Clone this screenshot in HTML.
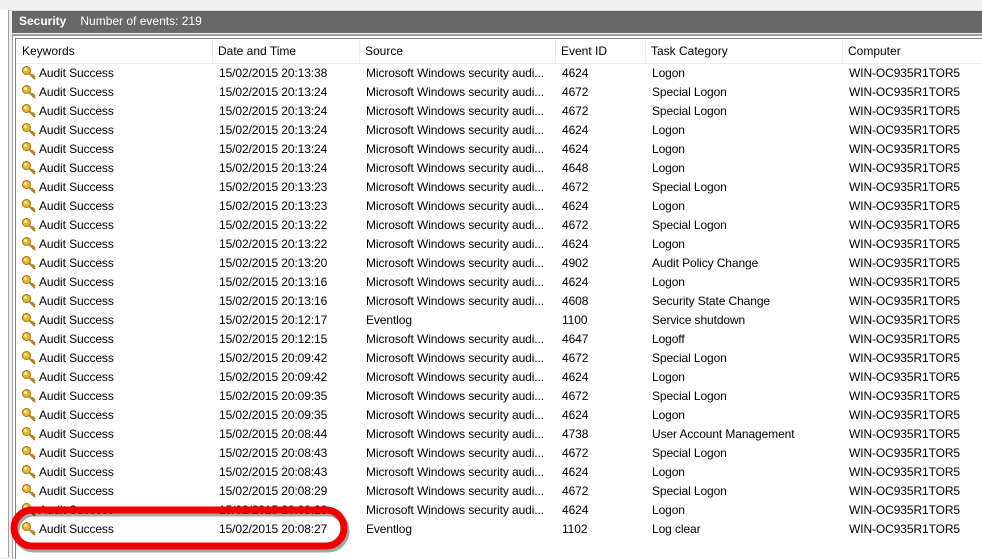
<!DOCTYPE html>
<html><head><style>
body{margin:0;width:982px;height:557px;overflow:hidden;background:#f0f0f0;font-family:"Liberation Sans",sans-serif;font-size:12px;color:#000;position:relative}
.left{position:absolute;left:0;top:10px;width:8px;height:547px;background:#fff;border-right:1px solid #a0a0a0}
.top{position:absolute;left:0;top:0;width:982px;height:10px;background:#f0f0f0;border-bottom:1px solid #d9d9d9}
.bar{position:absolute;left:12px;top:11px;width:970px;height:22px;background:#686868;color:#fff;line-height:21px}
.bar b{margin-left:7px;margin-right:14px}
.list{position:absolute;left:12px;top:34px;width:970px;height:523px;background:#fff;border-top:2px solid #a0a0a0;border-left:1px solid #a0a0a0}
.inner{position:absolute;left:2px;top:2px;right:0;bottom:0;border-left:1px solid #828282;border-top:1px solid #828282}
.hdr{position:absolute;top:0;left:0;right:0;height:24px;border-bottom:1px solid #e5edf6}
.hdr span{position:absolute;top:5px}
.hdr i{position:absolute;top:0;height:24px;border-left:1px solid #e5edf6}
.row{position:absolute;left:0;height:19px;width:960px}
.row span{position:absolute;top:2px;white-space:nowrap;letter-spacing:-0.1px}
.key{position:absolute;left:5px;top:1px;width:16px;height:16px}
</style></head><body>
<div class="top"></div>
<div class="left"></div>
<div class="bar"><b>Security</b>Number of events: 219</div>
<div class="list"><div class="inner">
<div class="hdr">
<span style="left:6px">Keywords</span><i style="left:196px"></i>
<span style="left:202px">Date and Time</span><i style="left:343px"></i>
<span style="left:349px">Source</span><i style="left:539px"></i>
<span style="left:545px">Event ID</span><i style="left:629px"></i>
<span style="left:635px">Task Category</span><i style="left:826px"></i>
<span style="left:832px">Computer</span>
</div>
<div id="rows"></div>
</div></div>
<svg style="position:absolute;left:0;top:0" width="982" height="557"><rect x="16" y="513" width="330" height="36" rx="18" ry="18" fill="none" stroke="rgba(0,0,0,0.35)" stroke-width="7"/><rect x="14" y="510" width="330" height="36" rx="18" ry="18" fill="none" stroke="#ee0000" stroke-width="7"/></svg>
<script>
var d=[["15/02/2015 20:13:38","Microsoft Windows security audi...","4624","Logon"],
["15/02/2015 20:13:24","Microsoft Windows security audi...","4672","Special Logon"],
["15/02/2015 20:13:24","Microsoft Windows security audi...","4672","Special Logon"],
["15/02/2015 20:13:24","Microsoft Windows security audi...","4624","Logon"],
["15/02/2015 20:13:24","Microsoft Windows security audi...","4624","Logon"],
["15/02/2015 20:13:24","Microsoft Windows security audi...","4648","Logon"],
["15/02/2015 20:13:23","Microsoft Windows security audi...","4672","Special Logon"],
["15/02/2015 20:13:23","Microsoft Windows security audi...","4624","Logon"],
["15/02/2015 20:13:22","Microsoft Windows security audi...","4672","Special Logon"],
["15/02/2015 20:13:22","Microsoft Windows security audi...","4624","Logon"],
["15/02/2015 20:13:20","Microsoft Windows security audi...","4902","Audit Policy Change"],
["15/02/2015 20:13:16","Microsoft Windows security audi...","4624","Logon"],
["15/02/2015 20:13:16","Microsoft Windows security audi...","4608","Security State Change"],
["15/02/2015 20:12:17","Eventlog","1100","Service shutdown"],
["15/02/2015 20:12:15","Microsoft Windows security audi...","4647","Logoff"],
["15/02/2015 20:09:42","Microsoft Windows security audi...","4672","Special Logon"],
["15/02/2015 20:09:42","Microsoft Windows security audi...","4624","Logon"],
["15/02/2015 20:09:35","Microsoft Windows security audi...","4672","Special Logon"],
["15/02/2015 20:09:35","Microsoft Windows security audi...","4624","Logon"],
["15/02/2015 20:08:44","Microsoft Windows security audi...","4738","User Account Management"],
["15/02/2015 20:08:43","Microsoft Windows security audi...","4672","Special Logon"],
["15/02/2015 20:08:43","Microsoft Windows security audi...","4624","Logon"],
["15/02/2015 20:08:29","Microsoft Windows security audi...","4672","Special Logon"],
["15/02/2015 20:08:28","Microsoft Windows security audi...","4624","Logon"],
["15/02/2015 20:08:27","Eventlog","1102","Log clear"]];
var key='<svg class="key" viewBox="0 0 16 16"><circle cx="5.5" cy="5.5" r="4" fill="#e8b830" stroke="#a07010"/><circle cx="4.5" cy="4.5" r="1.3" fill="#fff6c0"/><path d="M8 8 L14 14 M11 11 L12.5 9.5 M12.5 12.5 L14 11" stroke="#b08020" stroke-width="2" fill="none"/></svg>';
var h='';
d.forEach(function(r,i){h+='<div class="row" style="top:'+(25+19*i)+'px">'+key+'<span style="left:23px">Audit Success</span><span style="left:203px">'+r[0]+'</span><span style="left:350px">'+r[1]+'</span><span style="left:546px">'+r[2]+'</span><span style="left:636px">'+r[3]+'</span><span style="left:833px">WIN-OC935R1TOR5</span></div>'});
document.getElementById('rows').innerHTML=h;
</script>
</body></html>
